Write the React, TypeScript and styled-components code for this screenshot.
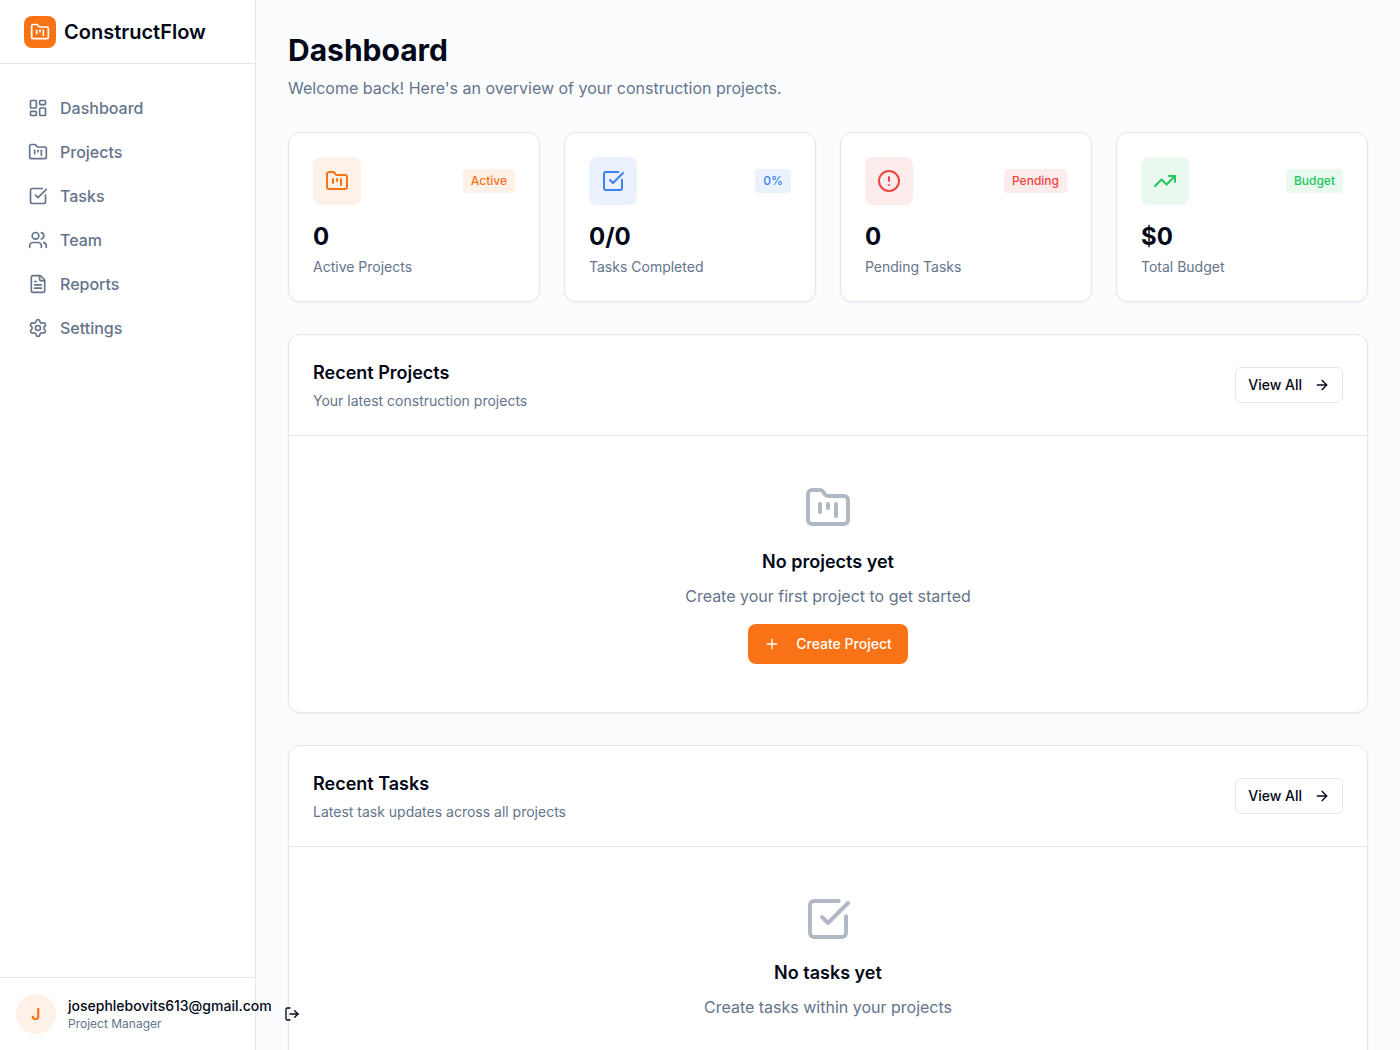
import React from "react";
import styled, { createGlobalStyle } from "styled-components";
import {
  ArrowRight,
  CircleAlert,
  FileText,
  FolderKanban,
  LayoutDashboard,
  LogOut,
  Plus,
  Settings,
  SquareCheckBig,
  TrendingUp,
  Users,
  type LucideIcon,
} from "lucide-react";

const color = {
  page: "#fbfcfe",
  surface: "#ffffff",
  text: "#020817",
  muted: "#64748b",
  border: "#e3e7eb",
  brand: "#f97316",
};

const GlobalStyle = createGlobalStyle`
  *, *::before, *::after { box-sizing: border-box; }
  body {
    margin: 0;
    background: ${color.page};
    color: ${color.text};
    font-family: Inter, "Liberation Sans", sans-serif;
    font-size: 16px;
    line-height: 24px;
  }
  h1, h2, h3, p { margin: 0; }
  button { font: inherit; color: inherit; cursor: pointer; }
  svg { display: block; flex-shrink: 0; }
`;

const Shell = styled.div`
  display: grid;
  grid-template-columns: 256px minmax(0, 1fr);
  align-items: start;
`;

const Sidebar = styled.aside`
  position: sticky;
  top: 0;
  z-index: 1;
  display: flex;
  flex-direction: column;
  height: 100vh;
  background: ${color.surface};
  border-right: 1px solid ${color.border};
`;

const Brand = styled.div`
  display: flex;
  align-items: center;
  gap: 8px;
  height: 64px;
  padding: 0 24px;
  border-bottom: 1px solid ${color.border};
  font-size: 20px;
  line-height: 28px;
  font-weight: 600;
`;

const BrandMark = styled.span`
  display: grid;
  place-items: center;
  width: 32px;
  height: 32px;
  border-radius: 8px;
  background: ${color.brand};
  color: #ffffff;
`;

const Nav = styled.nav`
  display: flex;
  flex: 1;
  flex-direction: column;
  gap: 4px;
  padding: 24px 16px;
`;

const NavLink = styled.a`
  display: flex;
  align-items: center;
  gap: 12px;
  padding: 8px 12px;
  border-radius: 8px;
  color: ${color.muted};
  font-weight: 500;
  text-decoration: none;

  &:hover {
    background: #f1f5f9;
  }
`;

const Profile = styled.div`
  display: flex;
  align-items: center;
  gap: 12px;
  padding: 16px;
  border-top: 1px solid ${color.border};
`;

const Avatar = styled.span`
  display: grid;
  flex-shrink: 0;
  place-items: center;
  width: 40px;
  height: 40px;
  border-radius: 50%;
  background: #fef1e8;
  color: ${color.brand};
  font-weight: 600;
`;

const Identity = styled.div`
  white-space: nowrap;
`;

const Email = styled.p`
  font-size: 14px;
  line-height: 20px;
  font-weight: 500;
`;

const Role = styled.p`
  color: ${color.muted};
  font-size: 12px;
  line-height: 16px;
`;

const SignOut = styled.button`
  padding: 0;
  border: 0;
  background: none;
`;

const Main = styled.main`
  display: flex;
  flex-direction: column;
  gap: 32px;
  padding: 32px;
`;

const PageTitle = styled.h1`
  margin-bottom: 8px;
  font-size: 30px;
  line-height: 36px;
  font-weight: 700;
`;

const Muted = styled.p`
  color: ${color.muted};
`;

const SmallMuted = styled(Muted)`
  font-size: 14px;
  line-height: 20px;
`;

const Stats = styled.div`
  display: grid;
  grid-template-columns: repeat(auto-fit, minmax(220px, 1fr));
  gap: 24px;
`;

const Card = styled.section`
  border: 1px solid ${color.border};
  border-radius: 12px;
  background: ${color.surface};
  box-shadow: 0 1px 2px rgba(0, 0, 0, 0.05);
`;

const StatCard = styled(Card)`
  padding: 24px;
`;

const StatTop = styled.div`
  display: flex;
  align-items: center;
  justify-content: space-between;
  margin-bottom: 16px;
`;

const StatIcon = styled.span<{ $ink: string; $tint: string }>`
  display: grid;
  place-items: center;
  width: 48px;
  height: 48px;
  border-radius: 8px;
  background: ${(p) => p.$tint};
  color: ${(p) => p.$ink};
`;

const Badge = styled.span<{ $ink: string; $tint: string }>`
  padding: 4px 8px;
  border-radius: 4px;
  background: ${(p) => p.$tint};
  color: ${(p) => p.$ink};
  font-size: 12px;
  line-height: 16px;
  font-weight: 500;
`;

const StatValue = styled.p`
  margin-bottom: 4px;
  font-size: 24px;
  line-height: 32px;
  font-weight: 700;
`;

const CardHeader = styled.header`
  display: flex;
  align-items: center;
  justify-content: space-between;
  padding: 24px;
  border-bottom: 1px solid ${color.border};
`;

const CardTitle = styled.h2`
  margin-bottom: 4px;
  font-size: 18px;
  line-height: 28px;
  font-weight: 600;
`;

const OutlineButton = styled.button`
  display: flex;
  align-items: center;
  gap: 12px;
  height: 36px;
  padding: 0 12px;
  border: 1px solid ${color.border};
  border-radius: 6px;
  background: ${color.surface};
  font-size: 14px;
  line-height: 20px;
  font-weight: 500;
`;

const PrimaryButton = styled.button`
  display: flex;
  align-items: center;
  gap: 16px;
  height: 40px;
  margin-top: 16px;
  padding: 0 16px;
  border: 0;
  border-radius: 8px;
  background: ${color.brand};
  color: #ffffff;
  font-size: 14px;
  line-height: 20px;
  font-weight: 500;
`;

const Empty = styled.div`
  display: flex;
  flex-direction: column;
  align-items: center;
  padding: 48px;
  text-align: center;
`;

const EmptyIcon = styled.span`
  margin-bottom: 16px;
  color: ${color.muted};

  svg {
    opacity: 0.5;
  }
`;

const EmptyTitle = styled.h3`
  margin-bottom: 8px;
  font-size: 18px;
  line-height: 28px;
  font-weight: 600;
`;

const navItems: { label: string; icon: LucideIcon }[] = [
  { label: "Dashboard", icon: LayoutDashboard },
  { label: "Projects", icon: FolderKanban },
  { label: "Tasks", icon: SquareCheckBig },
  { label: "Team", icon: Users },
  { label: "Reports", icon: FileText },
  { label: "Settings", icon: Settings },
];

const stats: {
  label: string;
  value: string;
  badge: string;
  icon: LucideIcon;
  ink: string;
  tint: string;
}[] = [
  { label: "Active Projects", value: "0", badge: "Active", icon: FolderKanban, ink: "#f97316", tint: "#fef1e8" },
  { label: "Tasks Completed", value: "0/0", badge: "0%", icon: SquareCheckBig, ink: "#3b82f6", tint: "#ebf2fe" },
  { label: "Pending Tasks", value: "0", badge: "Pending", icon: CircleAlert, ink: "#ef4444", tint: "#fdecec" },
  { label: "Total Budget", value: "$0", badge: "Budget", icon: TrendingUp, ink: "#22c55e", tint: "#e9f9ef" },
];

type RecentPanelProps = {
  title: string;
  subtitle: string;
  icon: LucideIcon;
  emptyTitle: string;
  emptyText: string;
  action?: string;
};

function RecentPanel({ title, subtitle, icon: Icon, emptyTitle, emptyText, action }: RecentPanelProps) {
  return (
    <Card>
      <CardHeader>
        <div>
          <CardTitle>{title}</CardTitle>
          <SmallMuted>{subtitle}</SmallMuted>
        </div>
        <OutlineButton type="button">
          View All
          <ArrowRight size={16} />
        </OutlineButton>
      </CardHeader>
      <Empty>
        <EmptyIcon>
          <Icon size={48} />
        </EmptyIcon>
        <EmptyTitle>{emptyTitle}</EmptyTitle>
        <Muted>{emptyText}</Muted>
        {action && (
          <PrimaryButton type="button">
            <Plus size={16} />
            {action}
          </PrimaryButton>
        )}
      </Empty>
    </Card>
  );
}

export default function App() {
  return (
    <Shell>
      <GlobalStyle />
      <Sidebar>
        <Brand>
          <BrandMark>
            <FolderKanban size={20} />
          </BrandMark>
          ConstructFlow
        </Brand>
        <Nav>
          {navItems.map(({ label, icon: Icon }) => (
            <NavLink key={label} href={`#${label.toLowerCase()}`}>
              <Icon size={20} />
              {label}
            </NavLink>
          ))}
        </Nav>
        <Profile>
          <Avatar>J</Avatar>
          <Identity>
            <Email>josephlebovits613@gmail.com</Email>
            <Role>Project Manager</Role>
          </Identity>
          <SignOut type="button" aria-label="Sign out">
            <LogOut size={16} />
          </SignOut>
        </Profile>
      </Sidebar>
      <Main>
        <header>
          <PageTitle>Dashboard</PageTitle>
          <Muted>Welcome back! Here's an overview of your construction projects.</Muted>
        </header>
        <Stats>
          {stats.map(({ label, value, badge, icon: Icon, ink, tint }) => (
            <StatCard key={label}>
              <StatTop>
                <StatIcon $ink={ink} $tint={tint}>
                  <Icon size={24} />
                </StatIcon>
                <Badge $ink={ink} $tint={tint}>
                  {badge}
                </Badge>
              </StatTop>
              <StatValue>{value}</StatValue>
              <SmallMuted>{label}</SmallMuted>
            </StatCard>
          ))}
        </Stats>
        <RecentPanel
          title="Recent Projects"
          subtitle="Your latest construction projects"
          icon={FolderKanban}
          emptyTitle="No projects yet"
          emptyText="Create your first project to get started"
          action="Create Project"
        />
        <RecentPanel
          title="Recent Tasks"
          subtitle="Latest task updates across all projects"
          icon={SquareCheckBig}
          emptyTitle="No tasks yet"
          emptyText="Create tasks within your projects"
        />
      </Main>
    </Shell>
  );
}
